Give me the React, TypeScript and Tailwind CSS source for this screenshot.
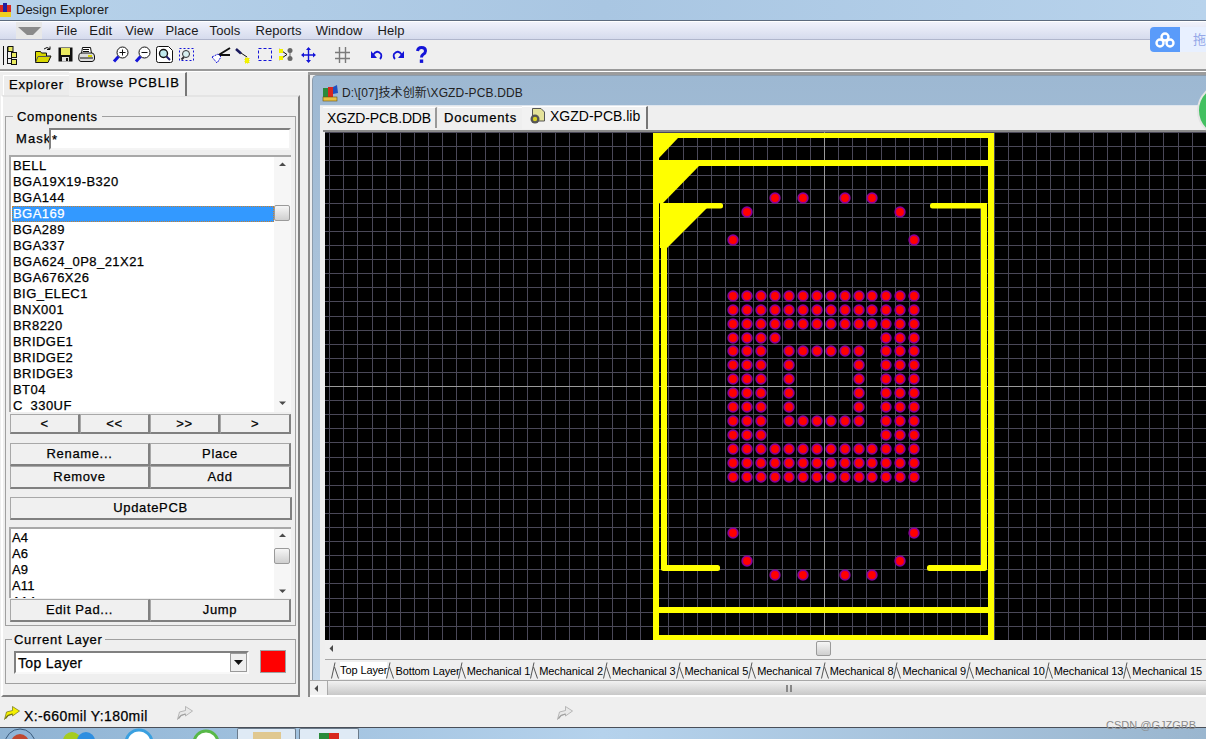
import React from "react";

const txt = "[-webkit-text-stroke-width:0.25px]";

const components = ["BELL","BGA19X19-B320","BGA144","BGA169","BGA289","BGA337","BGA624_0P8_21X21","BGA676X26","BIG_ELEC1","BNX001","BR8220","BRIDGE1","BRIDGE2","BRIDGE3","BT04","C_330UF"];
const pins = ["A4","A6","A9","A11","A14"];
const menus: [string, string][] = [["File","ml-[14px]"],["Edit","ml-[12px]"],["View","ml-[13px]"],["Place","ml-[12px]"],["Tools","ml-[11px]"],["Reports","ml-[15px]"],["Window","ml-[14px]"],["Help","ml-[15px]"]];
const layers = ["Mechanical 1","Mechanical 2","Mechanical 3","Mechanical 5","Mechanical 7","Mechanical 8","Mechanical 9","Mechanical 10","Mechanical 13","Mechanical 15"];

function Btn({ className, children }: { className: string; children: React.ReactNode }) {
  return (
    <div className={`flex items-center justify-center bg-[#f0f0f0] border border-[#a8a8a8] border-r-2 border-b-2 border-r-[#808080] border-b-[#808080] text-[13px] tracking-[0.65px] text-black ${txt} ${className}`}>
      {children}
    </div>
  );
}

function ScrollArrow({ dir }: { dir: "up" | "down" | "left" }) {
  const p = dir === "up" ? "M1 5 L4.5 1.5 L8 5Z" : dir === "down" ? "M1 1.5 L8 1.5 L4.5 5Z" : "M5 1 L5 8 L1.5 4.5Z";
  return <svg width="9" height="9" viewBox="0 0 9 9"><path d={p} fill="#4a4a4a" /></svg>;
}

function Thumb({ className }: { className: string }) {
  return <div className={`rounded-[2px] border border-[#9a9a9a] bg-gradient-to-b from-[#f6f6f6] to-[#cfcfcf] ${className}`} />;
}

function Flash({ color, edge }: { color: string; edge: string }) {
  return (
    <svg width="16" height="14" viewBox="0 0 16 14">
      <path d="M0.5 13.5 L2.5 6 L8.5 4.5 L8.5 0.5 L15.5 5 L8.5 10 L8.5 8 L4 9.5 Z" fill={color} stroke={edge} strokeWidth="0.7" />
      <path d="M1.5 12.5 L4 9.5 L8.5 8" fill="none" stroke={edge} strokeWidth="1.2" />
    </svg>
  );
}

function Mag({ sign }: { sign: "+" | "-" }) {
  return (
    <svg width="17" height="18" viewBox="0 0 17 18">
      <circle cx="10.5" cy="6.5" r="5.5" fill="#fff" stroke="#111" />
      <path d="M6.5 10.5 L2 15.5" stroke="#1414d8" strokeWidth="3" />
      <path d="M7.5 6.5 h6" stroke="#111" />
      {sign === "+" && <path d="M10.5 3.5 v6" stroke="#111" />}
    </svg>
  );
}

function Toolbar() {
  return (
    <div className="flex h-[29px] items-start bg-[#efefef] pt-[6px] pl-[2px]">
      <svg width="15" height="19" viewBox="0 0 15 19">
        <path d="M1.5 0 v19 M5.5 1 v17 M5 5.5 h5 M5 12.5 h5 M5 17.5 h5" stroke="#111" fill="none" />
        <rect x="6" y="0.5" width="5" height="5" fill="#e8e860" stroke="#111" />
        <rect x="9.5" y="6.5" width="5" height="5" fill="#e8e860" stroke="#111" />
        <rect x="9.5" y="13.5" width="5" height="5" fill="#e8e860" stroke="#111" />
      </svg>
      <svg className="ml-[18px]" width="17" height="18" viewBox="0 0 17 18">
        <path d="M0.5 5.5 h5 l1 1.5 h5 v3 h4.5 l-3 6.5 H0.5Z" fill="#d8d800" stroke="#111" />
        <path d="M0.5 16.5 L3 10.5 H15" fill="none" stroke="#555" />
        <path d="M9 3 Q12 0 15 3 M15 0.5 V3.5 H12" fill="none" stroke="#111" />
      </svg>
      <svg className="ml-[6px]" width="15" height="17" viewBox="0 0 15 17">
        <rect x="0.5" y="1.5" width="14" height="14" fill="#111" />
        <rect x="3" y="2" width="9" height="7" fill="#e8e860" />
        <rect x="4" y="11" width="7" height="4.5" fill="#ddd" />
        <rect x="8" y="12" width="2" height="3" fill="#111" />
      </svg>
      <svg className="ml-[5px]" width="17" height="17" viewBox="0 0 17 17">
        <path d="M4.5 1.5 h8 l1 6 h-10Z" fill="#fff" stroke="#111" />
        <path d="M1 8.5 Q2 7 4 7 h10 q2 0 2.5 3 v3 q-.5 2.5-2.5 2.5 h-11 Q1 15.5 .7 13Z" fill="#ddd" stroke="#111" />
        <path d="M2 12 h13 M5 3.5 h6 M5 5.5 h6" stroke="#111" />
        <rect x="10" y="9" width="4" height="2" fill="#d8d800" />
      </svg>
      <div className="ml-[17px]"><Mag sign="+" /></div>
      <div className="ml-[5px]"><Mag sign="-" /></div>
      <svg className="ml-[5px]" width="17" height="17" viewBox="0 0 17 17">
        <path d="M2.5 .5 h10 l4 4 v10 a2 2 0 0 1-2 2 h-12 a2 2 0 0 1-2-2 v-12 a2 2 0 0 1 2-2Z" fill="#fff" stroke="#111" />
        <circle cx="7.5" cy="7.5" r="4" fill="#bfe8ee" stroke="#111" strokeWidth="1.4" />
        <path d="M10.5 10.5 L14 14" stroke="#1a1a6e" strokeWidth="2" />
      </svg>
      <svg className="ml-[6px]" width="15" height="17" viewBox="0 0 15 17">
        <rect x=".5" y="2.5" width="14" height="12" fill="none" stroke="#1414d8" strokeDasharray="2 2" />
        <circle cx="7" cy="8" r="3.5" fill="#d8f0f0" stroke="#333" />
        <path d="M5 11 L2.5 13.5" stroke="#333" strokeWidth="2" />
      </svg>
      <svg className="ml-[17px]" width="20" height="19" viewBox="0 0 20 19">
        <path d="M6 10 L19 2 M6 9 H19" stroke="#111" strokeWidth="2" />
        <path d="M1 11 L7 8 L10 11 L6 17Z" fill="#fff" stroke="#1414d8" strokeDasharray="2 1" />
      </svg>
      <svg className="ml-[4px]" width="16" height="19" viewBox="0 0 16 19">
        <path d="M1 3 L6 7.5" stroke="#1a1a5e" strokeWidth="2.5" />
        <path d="M6 7 L12 11" stroke="#111" />
        <path d="M10 12 h4 v5 h-4Z" fill="#f4f400" stroke="#e8e800" strokeDasharray="1 1" />
      </svg>
      <svg className="ml-[6px]" width="16" height="18" viewBox="0 0 16 18">
        <rect x="1.5" y="2.5" width="13" height="12" fill="none" stroke="#1414d8" strokeDasharray="3 2" />
      </svg>
      <svg className="ml-[5px]" width="15" height="18" viewBox="0 0 15 18">
        <path d="M1 3 L9 8.5 L1 14" fill="none" stroke="#111" />
        <rect x="1" y="3" width="4" height="4" fill="#f4f400" />
        <rect x="1" y="10" width="4" height="4" fill="#f4f400" />
        <circle cx="12" cy="4.5" r="2.5" fill="#666" />
        <circle cx="12" cy="12.5" r="2.5" fill="#666" />
        <path d="M12 5 V12" stroke="#666" />
      </svg>
      <svg className="ml-[8px]" width="15" height="18" viewBox="0 0 15 18">
        <path d="M7.5 2 V16 M1 9 H14" stroke="#1414d8" strokeWidth="1.4" />
        <path d="M7.5 1 L5 4 H10Z M7.5 17 L5 14 H10Z M0 9 L3 6.5 V11.5Z M15 9 L12 6.5 V11.5Z" fill="#1414d8" />
      </svg>
      <svg className="ml-[18px]" width="17" height="18" viewBox="0 0 17 18">
        <path d="M1 6.5 H16 M1 12.5 H16 M5.5 1 V17 M11.5 1 V17" stroke="#7a7a7a" strokeWidth="1.4" />
      </svg>
      <svg className="ml-[19px]" width="13" height="18" viewBox="0 0 13 18">
        <path d="M3 9 Q7 3 11 8 Q12 11 10 13" fill="none" stroke="#1414d8" strokeWidth="1.8" />
        <path d="M1 5 V12 H7Z" fill="#1414d8" />
      </svg>
      <svg className="ml-[9px]" width="13" height="18" viewBox="0 0 13 18">
        <path d="M10 9 Q6 3 2 8 Q1 11 3 13" fill="none" stroke="#1414d8" strokeWidth="1.8" />
        <path d="M12 5 V12 H6Z" fill="#1414d8" />
      </svg>
      <svg className="ml-[10px]" width="13" height="18" viewBox="0 0 13 18">
        <path d="M2.5 5 Q3 1.5 6.5 1.5 Q10.5 1.5 10.5 5 Q10.5 7 8 8.5 Q6.5 9.5 6.5 11.5" fill="none" stroke="#1414d8" strokeWidth="3" />
        <rect x="4.8" y="13.5" width="3.4" height="3.4" fill="#1414d8" />
      </svg>
    </div>
  );
}

function LeftPanel() {
  return (
    <div className="w-[300px] h-[625px] flex flex-col shrink-0 bg-[#efefef]">
      <div className="flex h-[23px] items-end pl-[3px]">
        <div className={`h-[20px] w-[66px] flex items-center pl-[5px] pb-[1px] border-l border-t border-[#ffffff] bg-[#ececec] text-[13px] tracking-[0.8px] ${txt}`}>Explorer</div>
        <div className={`h-[24px] -mb-[1px] w-[118px] flex items-center pl-[7px] border-t border-[#fff] border-r-2 border-r-[#777] bg-[#f0f0f0] text-[13px] tracking-[0.8px] relative z-10 pb-[3px] ${txt}`}>Browse PCBLIB</div>
      </div>
      <div className="ml-[1px] w-[299px] h-[602px] border-2 border-l-[#fff] border-t-[#e4e4e4] border-r-[#808080] border-b-[#808080] flex flex-col">
        <fieldset className="mt-[12px] ml-[2px] w-[291px] h-[517px] border border-[#a0a0a0] px-[3px] min-w-0">
          <legend className={`ml-[4px] px-[4px] text-[13px] leading-[15px] tracking-[0.7px] ${txt}`}>Components</legend>
          <div className="flex h-[22px] mt-[4px]">
            <div className={`ml-[7px] w-[33px] overflow-hidden whitespace-nowrap text-[13px] leading-[22px] tracking-[1.1px] ${txt}`}>Mask</div>
            <div className={`w-[242px] h-[22px] bg-white border-2 border-t-[#808080] border-l-[#808080] border-r-[#f4f4f4] border-b-[#f4f4f4] text-[13px] leading-[20px] pl-[1px] ${txt}`}>*</div>
          </div>
          <div className="mt-[5px] h-[257px] w-[282px] border-t-2 border-l-2 border-[#a8a8a8] bg-white flex overflow-hidden">
            <div className="w-[263px] shrink-0 pl-[1px] pt-[1px]">
              {components.map((c) => (
                <div key={c} className={`h-[16px] leading-[16px] text-[13px] tracking-[0.45px] pl-[1px] whitespace-nowrap ${txt} ${c === "BGA169" ? "bg-[#3399ff] text-white outline-1 -outline-offset-1 outline-dotted outline-[#c88030]" : "text-black"}`}>{c}</div>
              ))}
            </div>
            <div className="flex-1 bg-[#f6f6f6] flex flex-col items-center relative">
              <div className="mt-[4px]"><ScrollArrow dir="up" /></div>
              <Thumb className="absolute top-[48px] left-0 w-[16px] h-[16px]" />
              <div className="mt-auto mb-[3px]"><ScrollArrow dir="down" /></div>
            </div>
          </div>
          <div className="flex mt-[2px] ml-[1px] w-[281px] h-[20px]">
            <Btn className="w-[70px]">&lt;</Btn>
            <Btn className="w-[70px]">&lt;&lt;</Btn>
            <Btn className="w-[70px]">&gt;&gt;</Btn>
            <Btn className="w-[71px]">&gt;</Btn>
          </div>
          <div className="grid grid-cols-[140px_141px] grid-rows-[23px_23px] mt-[9px] ml-[1px] w-[281px]">
            <Btn className="">Rename...</Btn>
            <Btn className="">Place</Btn>
            <Btn className="">Remove</Btn>
            <Btn className="">Add</Btn>
          </div>
          <Btn className="mt-[8px] ml-[1px] w-[282px] h-[23px]">UpdatePCB</Btn>
          <div className="mt-[7px] h-[71px] w-[282px] border-t-2 border-l-2 border-[#a8a8a8] bg-white flex overflow-hidden">
            <div className="w-[263px] shrink-0 pt-[1px]">
              {pins.map((p) => (
                <div key={p} className={`h-[16px] leading-[16px] text-[13px] tracking-[0.2px] pl-[1px] ${txt}`}>{p}</div>
              ))}
            </div>
            <div className="flex-1 bg-[#f6f6f6] flex flex-col items-center relative">
              <div className="mt-[3px]"><ScrollArrow dir="up" /></div>
              <Thumb className="absolute top-[19px] left-0 w-[16px] h-[16px]" />
              <div className="mt-auto mb-[1px]"><ScrollArrow dir="down" /></div>
            </div>
          </div>
          <div className="grid grid-cols-[140px_141px] h-[21px] mt-[1px] ml-[1px] w-[281px]">
            <Btn className="">Edit Pad...</Btn>
            <Btn className="">Jump</Btn>
          </div>
        </fieldset>
        <fieldset className="mt-[6px] ml-[2px] w-[291px] h-[52px] border border-[#a0a0a0] min-w-0">
          <legend className={`ml-[6px] px-[2px] text-[13px] leading-[15px] tracking-[0.7px] ${txt}`}>Current Layer</legend>
          <div className="flex items-start mt-[4px] ml-[8px]">
            <div className={`w-[235px] h-[23px] bg-white border-2 border-t-[#808080] border-l-[#808080] border-r-[#f8f8f8] border-b-[#f8f8f8] flex items-center justify-between pl-[2px] pt-[1px] text-[14px] tracking-[0.35px] ${txt}`}>
              Top Layer
              <div className="w-[17px] h-[19px] -mt-[1px] bg-[#efefef] border border-[#999] flex items-center justify-center">
                <svg width="9" height="5" viewBox="0 0 9 5"><path d="M0 0 H9 L4.5 5Z" fill="#111" /></svg>
              </div>
            </div>
            <div className="ml-[11px] -mt-[1px] w-[26px] h-[23px] bg-[#ff0000] border border-[#a0a0a0]" />
          </div>
        </fieldset>
      </div>
    </div>
  );
}

function Canvas() {
  const xs: number[] = [];
  for (let k = -36; k <= 27; k++) xs.push(Math.round(824 + k * 14.14) + 0.5);
  const ys: number[] = [];
  for (let k = -18; k <= 19; k++) ys.push(Math.round(386 + k * 14.1) + 0.5);
  const px = [733, 747, 761, 775, 789, 803, 817, 831, 845, 859, 872, 886, 900, 914];
  const py = [296, 310, 324, 338, 351, 365, 379, 393, 407, 421, 435, 449, 463, 477];
  const has = (r: number, c: number) => {
    if (c <= 2 || c >= 11) return true;
    if (r <= 2 || r >= 11) return true;
    if (r === 3) return c === 3;
    if (r === 4 || r === 9) return c >= 4 && c <= 9;
    if (r >= 5 && r <= 8) return c === 4 || c === 9;
    return false;
  };
  const pads: [number, number][] = [];
  py.forEach((y, r) => px.forEach((x, c) => { if (has(r, c)) pads.push([x, y]); }));
  const outer: [number, number][] = [[775,198],[803,198],[845,198],[872,198],[747,212],[900,212],[733,240],[914,240],[733,533],[914,533],[747,561],[900,561],[775,575],[803,575],[845,575],[872,575]];
  const Y = "#ffff00";
  return (
    <svg className="block shrink-0" width="881" height="508" viewBox="325 132 881 508">
      <rect x="325" y="132" width="881" height="508" fill="#000" />
      <g shapeRendering="crispEdges" stroke="#4a4858" strokeWidth="1">
        {xs.map((x) => <line key={x} x1={x} x2={x} y1={132} y2={640} />)}
        {ys.map((y) => <line key={y} x1={325} x2={1206} y1={y} y2={y} />)}
        <line x1="824.5" x2="824.5" y1="132" y2="640" stroke="#9a9a9a" />
        <line x1="325" x2="1206" y1="386.5" y2="386.5" stroke="#9a9a9a" />
      </g>
      <g fill={Y} shapeRendering="crispEdges">
        <rect x="653" y="133" width="341" height="5" />
        <rect x="653" y="133" width="6" height="507" />
        <rect x="988" y="133" width="6" height="507" />
        <rect x="653" y="635" width="341" height="5" />
        <rect x="653" y="160" width="341" height="6" />
        <rect x="653" y="607" width="341" height="6" />
      </g>
      <g fill={Y}>
        <polygon points="659,138 678,138 659,158" />
        <polygon points="659,166 699,166 663,203 659,203" />
        <polygon points="660,203 707,208 667,248 660,248" />
        <rect x="660" y="203" width="63" height="5.5" rx="2.5" />
        <rect x="661" y="203" width="6" height="367" />
        <rect x="661" y="565" width="59" height="6" rx="2.5" />
        <rect x="930" y="203" width="57" height="5.5" rx="2.5" />
        <rect x="981" y="203" width="6" height="367" />
        <rect x="927" y="565" width="60" height="6" rx="2.5" />
      </g>
      {[...pads, ...outer].map(([x, y]) => (
        <g key={`${x}-${y}`}>
          <circle cx={x} cy={y} r="5.7" fill="#8a0096" />
          <circle cx={x} cy={y} r="3.9" fill="#ff0000" />
        </g>
      ))}
    </svg>
  );
}

function Slant({ className = "" }: { className?: string }) {
  return (
    <svg className={`shrink-0 ${className}`} width="9" height="17" viewBox="0 0 9 17">
      <path d="M0.5 16.5 L4 0.5 M3.5 5 L7.5 16.5" stroke="#555" fill="none" />
    </svg>
  );
}

function RightPane() {
  return (
    <div className="flex-1 h-[625px] flex min-w-0 ml-[8px] border-l-2 border-l-[#8c8c8c] bg-[#efefef]">
      <div className="flex-1 min-w-0 flex flex-col">
        <div className="h-[3px] bg-[#9c9c9c] -ml-[2px] shrink-0" />
        <div className="ml-[2px] flex-1 min-h-0 flex flex-col rounded-tl-[5px] border-l border-t border-[#8c9cac] bg-gradient-to-b from-[#9db8d2] to-[#c5d9ec]">
          <div className="h-[29px] shrink-0 flex items-center pl-[9px] gap-[3px] pt-[5px]">
            <svg width="17" height="17" viewBox="0 0 17 17">
              <rect x="1" y="3" width="5" height="10" fill="#2a8a3a" />
              <rect x="6" y="2" width="5" height="11" fill="#d8281e" />
              <path d="M11 2 L15 0 L16 8 L11 9Z" fill="#2050c0" />
              <rect x="1" y="12" width="14" height="4" fill="#e8c040" stroke="#6a5010" strokeWidth=".6" />
            </svg>
            <span className="text-[12px] tracking-[0.15px] text-[#222] whitespace-nowrap">D:\[07]技术创新\XGZD-PCB.DDB</span>
          </div>
          <div className="flex-1 min-h-0 flex bg-transparent">
            <div className="w-[7px] shrink-0" />
            <div className="flex-1 min-w-0 flex flex-col bg-[#efefef] border-t border-[#dfe6ee]">
              <div className="h-[23px] shrink-0 flex items-end pl-[3px]">
                <div className="h-[21px] w-[114px] flex items-center pl-[4px] border-r-2 border-r-[#999] border-t border-[#fff] text-[14px] tracking-[-0.15px] text-black whitespace-nowrap bg-[#efefef] mb-[1px]">XGZD-PCB.DDB</div>
                <div className={`h-[21px] ml-[1px] w-[84px] flex items-center pl-[6px] border-t border-[#fff] text-[13px] tracking-[0.8px] whitespace-nowrap mb-[1px] ${txt}`}>Documents</div>
                <div className="h-[23px] w-[126px] flex items-center gap-[4px] pl-[6px] pb-[3px] border-r-2 border-r-[#777] border-t border-[#fff] text-[14px] whitespace-nowrap relative z-10 bg-[#f2f2f2]">
                  <svg width="18" height="17" viewBox="0 0 18 17">
                    <path d="M4.5 .5 H13 L16.5 4 V13 H4.5Z" fill="#e4e29a" stroke="#555" />
                    <circle cx="7" cy="11" r="4.5" fill="#555" />
                    <circle cx="7" cy="11" r="2.2" fill="#d8d020" />
                  </svg>
                  XGZD-PCB.lib
                </div>
              </div>
              <div className="h-[3px] shrink-0 ml-[3px] border-b-2 border-b-[#8a8a8a]" />
              <div className="flex-1 min-h-0 ml-[5px] flex flex-col min-w-0">
                <Canvas />
                <div className="h-[20px] shrink-0 bg-[#f0f0f0] border-b border-[#a8a8a8] flex items-start relative">
                  <div className="mt-[4px] ml-[3px]"><ScrollArrow dir="left" /></div>
                  <Thumb className="absolute left-[491px] top-[1px] w-[15px] h-[15px]" />
                </div>
                <div className="h-[19px] shrink-0 flex items-end overflow-hidden pl-[6px] pb-[1px] mt-[2px] text-[11px] tracking-[-0.1px] leading-[15px] text-black whitespace-nowrap border-b border-[#666]">
                  <Slant />
                  <div className="h-[17px] bg-white flex items-center shrink-0">Top Layer</div>
                  <Slant className="-ml-[1px]" />
                  <div className="h-[16px] flex items-center shrink-0">Bottom Layer</div>
                  {layers.map((l, i) => (
                    <React.Fragment key={l}>
                      <Slant className={i === 0 ? "-ml-[2px]" : ""} />
                      <div className="h-[16px] flex items-center shrink-0">{l}</div>
                    </React.Fragment>
                  ))}
                </div>
              </div>
            </div>
          </div>
          <div className="h-[15px] shrink-0 -ml-[3px] bg-[#f0f0f0] border-t border-[#a8a8a8] flex items-center">
            <div className="ml-[3px] mr-[3px]"><ScrollArrow dir="left" /></div>
            <div className="flex-1 h-[14px] ml-[2px] bg-gradient-to-b from-[#f2f2f2] to-[#c8c8c8] border-l border-[#aaa] flex items-center justify-center pl-[44px]">
              <div className="w-[6px] h-[7px] border-x-2 border-[#888]" />
            </div>
          </div>
          <div className="h-[2px] shrink-0 bg-white -ml-[3px]" />
        </div>
      </div>
    </div>
  );
}

export default function App() {
  return (
    <div className="relative w-[1206px] h-[739px] overflow-hidden bg-[#efefef] text-black font-['Liberation_Sans','Noto_Sans_CJK_SC',sans-serif]">
      <div className="h-[20px] flex items-center bg-gradient-to-r from-[#b7d2ea] via-[#a9c6e2] to-[#b8d3ec]">
        <svg width="12" height="16" viewBox="0 0 12 16">
          <rect x="0" y="3" width="3" height="10" fill="#d8281e" />
          <rect x="3" y="1" width="4" height="10" fill="#2020a0" />
          <rect x="7" y="3" width="4" height="8" fill="#d8281e" />
          <rect x="0" y="10" width="11" height="5" fill="#f0d020" />
        </svg>
        <span className="ml-[4px] text-[13px] text-[#1a1a1a]">Design Explorer</span>
      </div>
      <div className="h-[2px] border-t border-[#5c6b7e] bg-white" />
      <div className="h-[18px] flex items-center bg-gradient-to-b from-[#f0f2fb] to-[#d6dbed] border-b border-[#b0b6cc] text-[13px] text-[#1a1a1a]">
        <div className="ml-[16px] w-[26px] h-[17px] bg-[#e8e8e8] flex items-center justify-center">
          <svg width="23" height="10" viewBox="0 0 23 10"><path d="M0 1 H23 L15 9 H9Z" fill="#8a8a8a" /></svg>
        </div>
        {menus.map(([m, c]) => <span key={m} className={`${c} tracking-[0.1px]`}>{m}</span>)}
      </div>
      <Toolbar />
      <div className="h-[3px] border-t-2 border-[#9a9a9a] bg-white" />
      <div className="flex h-[625px]">
        <LeftPanel />
        <RightPane />
      </div>
      <div className="h-[31px] flex items-center bg-[#efefef] border-b border-[#4a4f58] pt-[9px]">
        <div className="ml-[4px] mb-[7px]"><Flash color="#f4f000" edge="#70701a" /></div>
        <span className={`ml-[4px] text-[14px] tracking-[0.4px] ${txt}`}>X:-660mil Y:180mil</span>
        <div className="ml-[29px] mb-[7px]"><Flash color="#e8e8e8" edge="#a0a0a0" /></div>
        <div className="ml-[364px] mb-[7px]"><Flash color="#e8e8e8" edge="#a0a0a0" /></div>
      </div>
      <div className="h-[11px] relative flex items-start overflow-hidden bg-gradient-to-r from-[#8fb3d3] via-[#b5d2ec] to-[#9ab6cf]">
        <svg width="240" height="11" viewBox="0 0 240 11" className="shrink-0">
          <circle cx="20" cy="16" r="15" fill="#8fb5d8" stroke="#3a5a7a" />
          <circle cx="20" cy="15" r="9" fill="#c04830" />
          <circle cx="72" cy="13" r="9" fill="#a6cc1e" />
          <circle cx="86" cy="13" r="9" fill="#2e8ee0" />
          <circle cx="139" cy="15" r="13" fill="#fff" stroke="#3aa0e0" strokeWidth="3" />
          <circle cx="206" cy="15" r="12" fill="#fff" stroke="#58b848" strokeWidth="3" />
        </svg>
        <div className="w-[59px] h-[11px] bg-[#dfeaf5] border-x border-t border-[#6a7a8a] rounded-t-[2px] flex items-end justify-center shrink-0 -ml-[3px]">
          <div className="w-[28px] h-[7px] bg-[#e0c890]" />
        </div>
        <div className="w-[60px] h-[11px] ml-[3px] bg-[#dfeaf5] border-x border-t border-[#6a7a8a] rounded-t-[2px] flex items-end justify-center shrink-0">
          <div className="w-[10px] h-[6px] bg-[#2a8a3a]" />
          <div className="w-[10px] h-[6px] bg-[#d8281e]" />
        </div>
      </div>
      <div className="absolute left-[1150px] top-[27px] w-[56px] h-[25px] flex rounded-l-[4px] overflow-hidden">
        <div className="w-[30px] h-full bg-[#5a9bfa] flex items-center justify-center">
          <svg width="20" height="16" viewBox="0 0 20 16">
            <circle cx="10" cy="5" r="3.5" fill="none" stroke="#fff" strokeWidth="2.4" />
            <circle cx="5" cy="11" r="3.5" fill="none" stroke="#fff" strokeWidth="2.4" />
            <circle cx="15" cy="11" r="3.5" fill="none" stroke="#fff" strokeWidth="2.4" />
          </svg>
        </div>
        <div className="flex-1 bg-[#e8f0ff] text-[#95a8e8] text-[13px] leading-[25px] pl-[13px] overflow-hidden whitespace-nowrap">拖拽</div>
      </div>
      <div className="absolute left-[1197px] top-[84px] w-[53px] h-[48px] overflow-hidden">
        <div className="w-[53px] h-[53px] rounded-full bg-[#42c060] border-2 border-[#e4e4e4]" />
      </div>
      <div className="absolute left-[1106px] top-[718px] whitespace-nowrap text-[11px] leading-[14px] text-[#8a8a8a]">CSDN @GJZGRB</div>
    </div>
  );
}
